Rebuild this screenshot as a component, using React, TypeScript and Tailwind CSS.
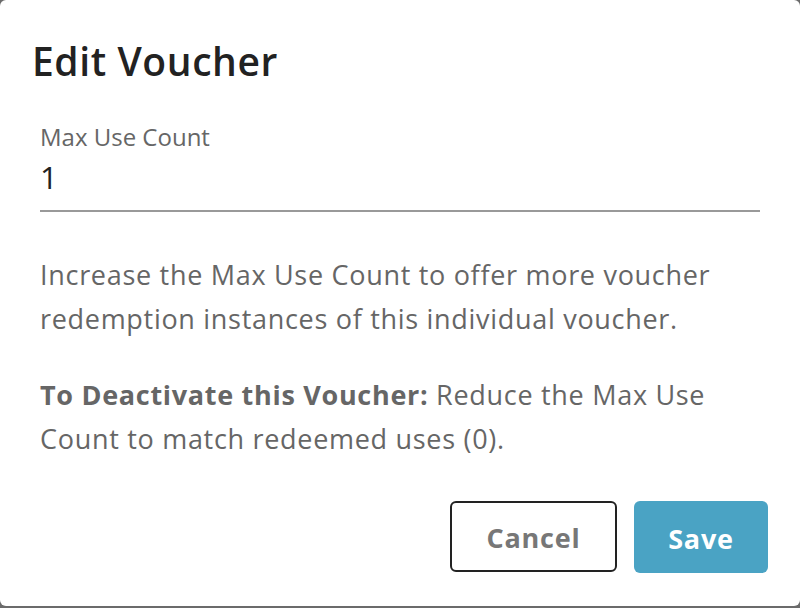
import React from "react";

export default function App() {
  return (
    <div
      className="w-[800px] h-[608px] bg-[#6b6b6b] overflow-hidden"
      style={{ fontFamily: '"Open Sans", "Noto Sans", sans-serif' }}
    >
      <div className="w-[800px] h-[606px] bg-white rounded-[6px] flex flex-col px-[32px] pt-[37px]">
        <h1 className="text-[39px] leading-[48px] font-semibold text-[#222] tracking-[0.6px]">Edit Voucher</h1>
        <div className="px-[8px] mt-[34px]">
          <label className="block text-[24px] leading-[36px] text-[#666]">Max Use Count</label>
          <div className="mt-[2px] text-[31px] leading-[40px] text-[#222] pb-[13px] border-b-2 border-[#999]">1</div>
          <p className="mt-[41px] text-[27px] leading-[44px] text-[#666] tracking-[0.7px]">
            Increase the Max Use Count to offer more voucher redemption instances of this individual voucher.
          </p>
          <p className="mt-[32px] text-[27px] leading-[44px] text-[#666] tracking-[0.7px]">
            <span className="font-bold">To Deactivate this Voucher:</span> Reduce the Max Use Count to match redeemed uses (0).
          </p>
        </div>
        <div className="mt-[40px] flex justify-end gap-[17px]">
          <button className="w-[167px] h-[71px] pt-[4px] rounded-[6px] border-2 border-[#222] bg-white text-[27px] font-bold text-[#777] tracking-[0.8px]">
            Cancel
          </button>
          <button className="w-[134px] h-[72px] pt-[4px] rounded-[6px] bg-[#4aa3c4] text-[27px] font-bold text-white tracking-[0.8px]">
            Save
          </button>
        </div>
      </div>
    </div>
  );
}
